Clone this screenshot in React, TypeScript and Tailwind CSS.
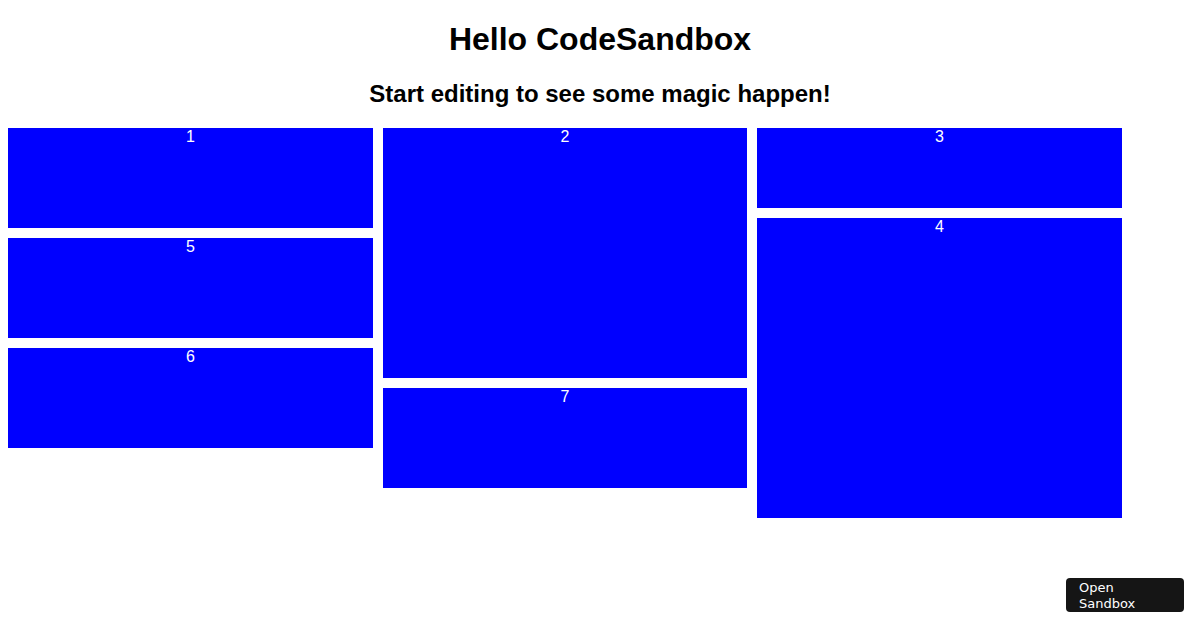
export default function App() {
  const Box = ({ n, h }: { n: number; h: string }) => (
    <div className={`bg-[#0000ff] text-white text-center text-base leading-[18px] ${h}`}>{n}</div>
  );
  return (
    <div className="relative w-[1200px] h-[630px] bg-white text-black overflow-hidden" style={{ fontFamily: '"Liberation Sans", Arial, sans-serif' }}>
      <div className="px-2 pt-[21px]">
        <h1 className="text-center text-[32px] font-bold leading-[37px]">Hello CodeSandbox</h1>
        <h2 className="text-center text-[24px] font-bold leading-[28px] mt-[22px]">Start editing to see some magic happen!</h2>
        <div className="flex gap-[10px] items-start mt-[20px]">
          <div className="w-[365px] flex flex-col gap-[10px]">
            <Box n={1} h="h-[100px]" />
            <Box n={5} h="h-[100px]" />
            <Box n={6} h="h-[100px]" />
          </div>
          <div className="w-[364px] flex flex-col gap-[10px]">
            <Box n={2} h="h-[250px]" />
            <Box n={7} h="h-[100px]" />
          </div>
          <div className="w-[365px] flex flex-col gap-[10px]">
            <Box n={3} h="h-[80px]" />
            <Box n={4} h="h-[300px]" />
          </div>
        </div>
      </div>
      <div
        className="absolute left-[1066px] top-[578px] w-[118px] h-[34px] bg-[#151515] rounded-[4px] text-white text-[13px] leading-[16px] pl-[13px] pt-[2px]"
        style={{ fontFamily: '"DejaVu Sans", Verdana, sans-serif' }}
      >
        <div>Open</div>
        <div>Sandbox</div>
      </div>
    </div>
  );
}
